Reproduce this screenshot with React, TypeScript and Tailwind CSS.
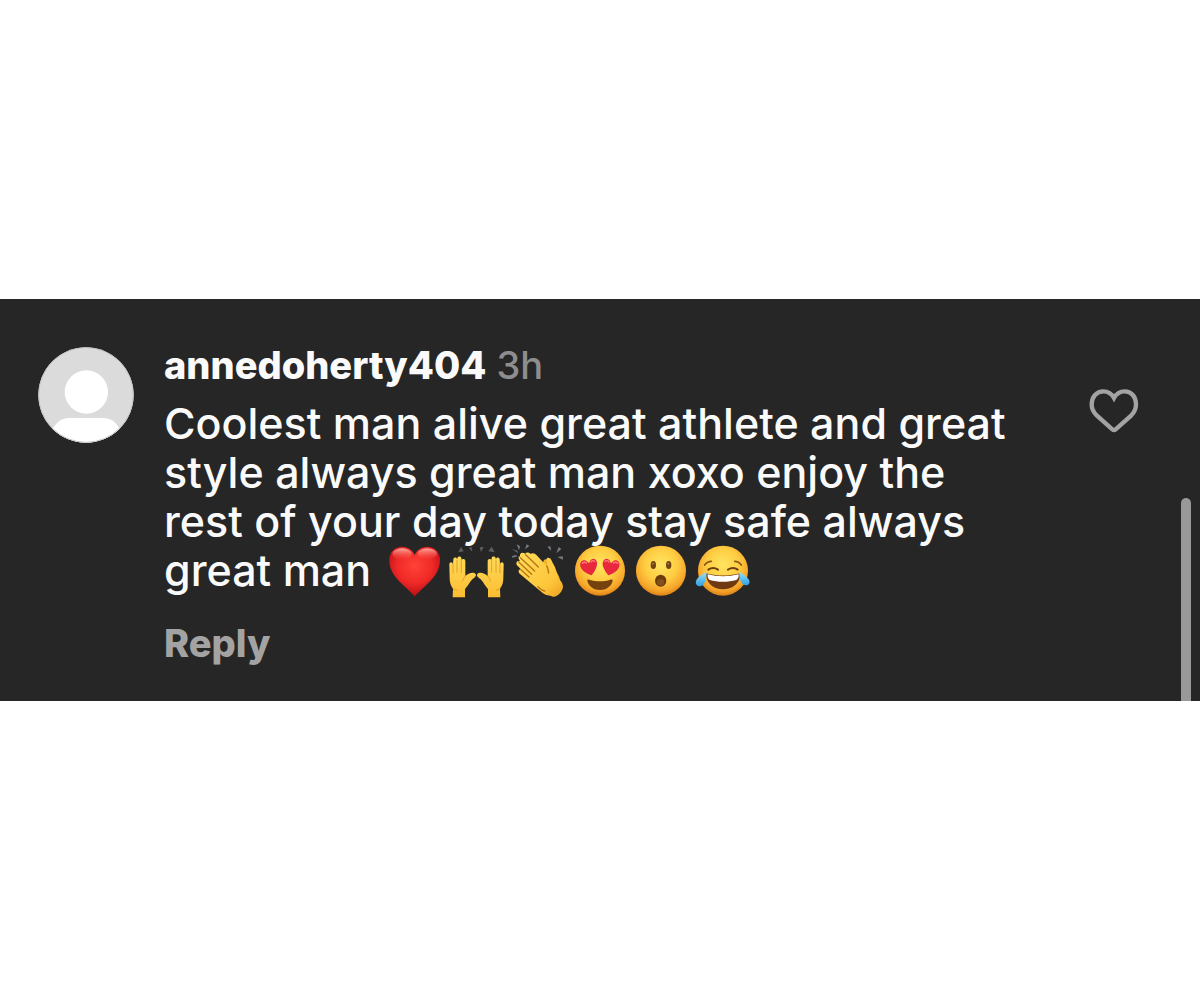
import React from 'react';

const Avatar = () => (
  <svg viewBox="54 171 288 288" className="w-24 h-24 shrink-0" role="img" aria-label="annedoherty404">
    <defs>
      <clipPath id="avatar-clip">
        <circle cx="198" cy="315" r="143" />
      </clipPath>
    </defs>
    <circle cx="198" cy="315" r="143" fill="#dbdbdb" />
    <circle cx="199" cy="306" r="65" fill="#fff" />
    <path
      d="M90 470V432Q110 384 148 384H250Q288 384 306 432V470Z"
      fill="#fff"
      clipPath="url(#avatar-clip)"
    />
    <circle cx="198" cy="315" r="142" fill="none" stroke="#c4c4c4" strokeWidth="3" />
  </svg>
);

const HeartOutline = () => (
  <svg viewBox="57 54 150 135" className="w-[50px] h-[45px]" aria-hidden="true">
    <path
      d="M137 178Q132 182 127 178L80 136C68 125 65 114 65 103C65 80 80 64 100 64C115 64 125 71 132 84C139 71 149 64 164 64C184 64 198 80 198 103C198 114 195 125 184 136Z"
      fill="none"
      stroke="#a3a3a3"
      strokeWidth="13"
      strokeLinejoin="miter"
    />
  </svg>
);

const emojiClass = 'w-[54px] h-[54px] shrink-0 overflow-visible';

const RedHeart = () => (
  <svg viewBox="18 30 162 162" className={emojiClass} role="img" aria-label="❤️">
    <defs>
      <radialGradient id="heart-fill" cx="50%" cy="38%" r="62%">
        <stop offset="0" stopColor="#ff4238" />
        <stop offset="0.55" stopColor="#f02a27" />
        <stop offset="1" stopColor="#b80c15" />
      </radialGradient>
      <linearGradient id="heart-shine" x1="0" y1="0" x2="0" y2="1">
        <stop offset="0" stopColor="#ffb9ae" stopOpacity="0.9" />
        <stop offset="1" stopColor="#ff5a4c" stopOpacity="0" />
      </linearGradient>
    </defs>
    <path
      d="M101 188C96 180 80 167 64 151C39 128 25 106 25 78C25 54 41 38 63 38C82 38 95 49 101 63C107 49 120 38 139 38C161 38 177 54 177 78C177 106 163 128 138 151C122 167 106 180 101 188Z"
      fill="url(#heart-fill)"
    />
    <ellipse cx="63" cy="60" rx="29" ry="17" fill="url(#heart-shine)" />
    <ellipse cx="139" cy="60" rx="29" ry="17" fill="url(#heart-shine)" />
  </svg>
);

const RaisedHands = () => (
  <svg viewBox="204 30 162 162" className={emojiClass} role="img" aria-label="🙌">
    <defs>
      <linearGradient id="hand-fill" x1="0" y1="0" x2="0" y2="1">
        <stop offset="0" stopColor="#ffda5a" />
        <stop offset="1" stopColor="#fbbd30" />
      </linearGradient>
      <g id="raised-hand">
        <path
          d="M215 190L216 164C208 154 206 143 206 132L205 91C205 83 215 83 216 91L217 76C218 69 228 69 228 76L229 73C230 66 241 66 241 73L242 79C243 73 253 73 253 81L253 126C260 119 272 114 280 117C287 120 286 127 280 131C271 137 267 144 262 152C258 158 254 161 252 166V190Z"
          fill="url(#hand-fill)"
        />
        <path
          d="M216 91V117M228 78V115M241 78V115M253 126C249 131 246 135 245 141M216 164C219 167 223 168 227 168"
          fill="none"
          stroke="#dd9622"
          strokeWidth="2.5"
          strokeLinecap="round"
        />
      </g>
    </defs>
    <use href="#raised-hand" />
    <use href="#raised-hand" transform="matrix(-1 0 0 1 573 0)" />
    <g fill="#5c5e62">
      <path d="M232 55L240 38L248 52Z" />
      <path d="M263 41L272 40L274 53Z" />
      <path d="M296 40L308 39L300 54Z" />
      <path d="M322 52L332 38L341 55Z" />
    </g>
  </svg>
);

const ClappingHands = () => (
  <svg viewBox="15 30 162 162" className={emojiClass} role="img" aria-label="👏">
    <defs>
      <linearGradient id="clap-fill" x1="0" y1="0" x2="1" y2="1">
        <stop offset="0" stopColor="#ffdd5c" />
        <stop offset="0.7" stopColor="#fdc63a" />
        <stop offset="1" stopColor="#ee9f1f" />
      </linearGradient>
    </defs>
    <path
      d="M112 84C112 73 124 73 130 82L140 100C150 112 160 124 163 142L171 158C168 174 158 184 144 188L120 170L100 90Z"
      fill="#f3b12d"
    />
    <path
      d="M42 67C40 58 49 53 57 59C61 54 69 54 74 60C79 56 87 58 92 64L122 96C126 92 122 82 121 76C123 68 132 70 136 78C140 88 147 96 150 108L158 134C168 143 171 150 170 158C166 174 154 184 141 188C130 183 120 185 110 177L43 121C35 115 37 105 45 106L33 94C28 86 34 79 42 82L39 76C36 70 38 67 42 67Z"
      fill="url(#clap-fill)"
    />
    <path
      d="M43 71L86 111M59 62L97 99M38 84L77 121M45 107L69 129M122 96C127 102 126 111 128 117M96 158C102 167 108 169 116 171"
      fill="none"
      stroke="#b87412"
      strokeWidth="4"
      strokeLinecap="round"
    />
    <g fill="#777d85">
      <path d="M32 31L42 37L39 49Z" />
      <path d="M18 44L34 51L36 57Z" />
      <path d="M62 31L70 36L57 46Z" />
      <path d="M17 67L30 63L34 67L20 71Z" />
      <path d="M124 38L133 37L136 51Z" />
      <path d="M158 39L166 45L151 58Z" />
      <path d="M154 69L170 67L171 77Z" />
    </g>
  </svg>
);

const FaceBase = ({ id, cx }: { id: string; cx: number }) => (
  <>
    <defs>
      <radialGradient id={id} cx="50%" cy="38%" r="64%">
        <stop offset="0" stopColor="#ffe561" />
        <stop offset="0.5" stopColor="#fecd42" />
        <stop offset="0.82" stopColor="#f6a52a" />
        <stop offset="1" stopColor="#d67a14" />
      </radialGradient>
    </defs>
    <circle cx={cx} cy="110" r="75" fill={`url(#${id})`} />
  </>
);

const HeartEyes = () => (
  <svg viewBox="201 30 162 162" className={emojiClass} role="img" aria-label="😍">
    <FaceBase id="face-heart-eyes" cx={282} />
    <path
      d="M257 124C246 121 227 112 223 97C220 84 230 76 240 80C244 82 247 85 249 88C251 80 257 72 265 75C274 78 275 90 271 100C268 110 262 118 257 124Z"
      fill="#e8283c"
    />
    <path
      d="M307 124C318 121 336 112 340 97C343 84 333 76 324 80C320 82 317 85 315 88C313 80 307 72 299 75C290 78 288 90 292 100C296 110 301 118 307 124Z"
      fill="#e8283c"
    />
    <path
      d="M229 88Q235 82 241 87M255 84Q259 77 266 82M297 82Q304 77 309 84M322 87Q329 82 335 88"
      stroke="#ff7d80"
      strokeWidth="4"
      fill="none"
      strokeLinecap="round"
    />
    <path
      d="M244 141C243 137 247 136 250 137C270 143 294 143 313 137C317 136 321 137 320 141C316 158 300 168 282 168C264 168 248 158 244 141Z"
      fill="#75410e"
    />
  </svg>
);

const SurprisedFace = () => (
  <svg viewBox="12 30 162 162" className={emojiClass} role="img" aria-label="😮">
    <FaceBase id="face-surprised" cx={90} />
    <ellipse cx="67" cy="93" rx="8" ry="12" fill="#6f4312" />
    <ellipse cx="113" cy="93" rx="8" ry="12" fill="#6f4312" />
    <circle cx="66" cy="89" r="3" fill="#a67a43" />
    <circle cx="112" cy="89" r="3" fill="#a67a43" />
    <ellipse cx="89" cy="140" rx="17" ry="18" fill="#6b3b0c" />
    <ellipse cx="89" cy="145" rx="11" ry="10" fill="#85501b" />
  </svg>
);

const TearsOfJoy = () => (
  <svg viewBox="198 30 162 162" className={emojiClass} role="img" aria-label="😂">
    <defs>
      <linearGradient id="tear-fill" x1="0" y1="0" x2="0" y2="1">
        <stop offset="0" stopColor="#9be3fb" />
        <stop offset="1" stopColor="#2f9fe0" />
      </linearGradient>
    </defs>
    <FaceBase id="face-joy" cx={276} />
    <path
      d="M221 93Q229 82 241 82M331 93Q323 82 311 82"
      fill="none"
      stroke="#8a5512"
      strokeWidth="5"
      strokeLinecap="round"
    />
    <path
      d="M232 107Q246 97 261 107M291 107Q306 97 320 107"
      fill="none"
      stroke="#6d3f0d"
      strokeWidth="6"
      strokeLinecap="round"
    />
    <path
      d="M225 121C225 118 228 118 231 119C260 126 292 126 321 119C324 118 328 118 328 121C327 149 304 166 276 166C248 166 226 149 225 121Z"
      fill="#70390f"
    />
    <path
      d="M230 121C260 129 292 129 323 121C324 129 321 135 316 138C292 145 260 145 236 138C231 135 229 129 230 121Z"
      fill="#fff"
    />
    <path
      d="M226 113C227 128 225 149 211 156C201 160 192 151 195 141C199 129 213 122 226 113Z"
      fill="url(#tear-fill)"
    />
    <path
      d="M325 113C324 128 327 147 340 153C350 157 358 149 355 140C351 129 338 122 325 113Z"
      fill="url(#tear-fill)"
    />
  </svg>
);

const App: React.FC = () => {
  return (
    <div className="min-h-screen bg-white flex flex-col justify-center font-['Inter','Liberation_Sans',sans-serif]">
      <main className="relative w-full bg-[#262626] overflow-hidden">
        <article className="flex items-start pt-12 pb-9 pl-[38px] pr-[61px]">
          <Avatar />

          <div className="flex-1 min-w-0 ml-[30px] mr-16 -mt-1">
            <header className="flex items-baseline gap-2.5 text-[38px] leading-[44px]">
              <a href="#annedoherty404" className="font-extrabold text-[#fafafa]">annedoherty404</a>
              <time className="font-medium text-[#8e8e8e]">3h</time>
            </header>

            <p className="mt-3 text-[43px] leading-[49px] font-medium text-[#fafafa]">
              Coolest man alive great athlete and great style always great man xoxo enjoy the rest of your
              day today stay safe always great man{' '}
              <span className="inline-flex items-center align-bottom gap-2 h-[49px] ml-1">
                <RedHeart />
                <RaisedHands />
                <ClappingHands />
                <HeartEyes />
                <SurprisedFace />
                <TearsOfJoy />
              </span>
            </p>

            <button type="button" className="block mt-[26px] text-[38px] leading-[44px] font-extrabold text-[#a3a3a3]">
              Reply
            </button>
          </div>

          <button type="button" aria-label="Like comment" className="mt-[41px] shrink-0">
            <HeartOutline />
          </button>
        </article>

        {/* scroll thumb */}
        <div className="absolute right-[9px] bottom-0 w-2.5 h-[203px] rounded-t-full bg-[#999999]" />
      </main>
    </div>
  );
};

export default App;
